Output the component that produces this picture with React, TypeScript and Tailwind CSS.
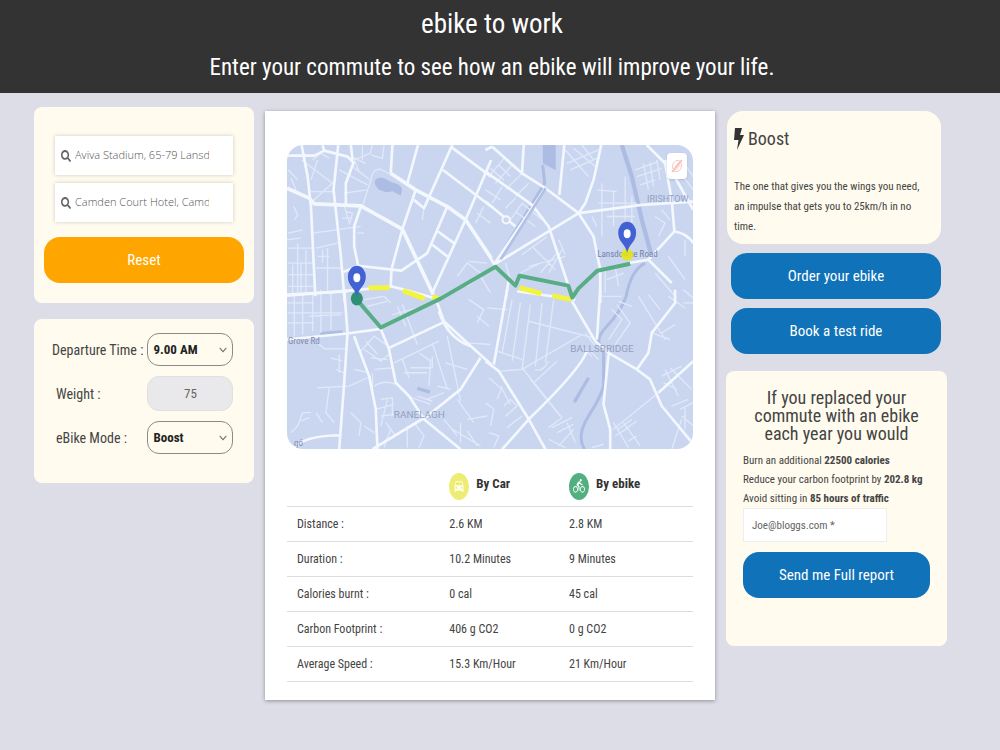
import React from 'react';
import { FaSearch } from 'react-icons/fa';
import { MdDirectionsBike, MdDirectionsCar } from 'react-icons/md';
import { ChevronDown } from 'lucide-react';

const rows = [
  { label: 'Distance :', car: '2.6 KM', ebike: '2.8 KM' },
  { label: 'Duration :', car: '10.2 Minutes', ebike: '9 Minutes' },
  { label: 'Calories burnt :', car: '0 cal', ebike: '45 cal' },
  { label: 'Carbon Footprint :', car: '406 g CO2', ebike: '0 g CO2' },
  { label: 'Average Speed :', car: '15.3 Km/Hour', ebike: '21 Km/Hour' },
];

const Pin: React.FC<{ x: number; y: number }> = ({ x, y }) => (
  <g transform={`translate(${x} ${y})`}>
    <path d="M0 18C-2 9-9 7-9-2A9 11 0 0 1 9-2C9 7 2 9 0 18Z" fill="#4262d3" />
    <ellipse cy="-1" rx="3.5" ry="4.5" fill="#fff" />
  </g>
);

const RouteMap: React.FC = () => (
  <div className="relative overflow-hidden rounded-2xl">
    <svg viewBox="0 0 1221 915" className="block w-full bg-[#cad6ef]" role="img" aria-label="Route map">
      {/* Water */}
      <g fill="none" stroke="#adbce2" strokeWidth="9">
        <path d="M769 0H808V76L770 55Z" stroke="none" fill="#adbce2" />
        <path d="M266 120C255 100 285 92 300 104C312 117 340 112 346 132L342 153L318 139L298 142L275 134Z" fill="#adbce2" stroke="none" />
        <path d="M769 60L775 115L625 360" />
        <path d="M1007 0L1037 95L1067 225L1097 335" strokeWidth="13" />
        <path d="M1077 355Q1035 375 1020 455Q1005 500 962 545T952 615V725Q945 755 907 815T895 915" />
        <path d="M907 700L864 773M392 732L430 743M100 567L168 562" strokeWidth="10" />
      </g>

      {/* Side streets */}
      <g fill="none" stroke="#e0e9f9" strokeWidth="4">
        <g transform="translate(-18 -15)">
          <path d="M62 60L155 130M90 120L110 60M90 155H160M88 190L160 125M95 60L120 40L145 55M235 95L220 60L268 40L275 15M210 50L255 70M245 15V60M310 15L305 55L270 45M175 90L260 135M215 80L265 118M245 200L270 120Q275 85 300 88L380 130M190 160L258 150M195 215L215 220L205 255M185 235H215M190 195L205 250" />
          <path d="M95 280L240 260M105 325L170 310M105 385H185M22 325H95M22 370H100M22 405H98M22 440H98M50 310V465M75 330V465M35 375V465M60 370V465M22 280L65 270M30 115L45 150M22 90L50 120M38 200L50 225L40 240M125 330V370M140 325V460M110 350H145M228 280H250M18 300L60 295M430 205L425 240M530 410L560 370L600 400M565 365L620 370M560 440L600 410L630 460" />
          <path d="M585 250L610 200M590 220L630 250" />
        </g>
        <g transform="translate(597 -15)">
          <path d="M10 110L60 50M30 130L80 75M60 150L115 95M90 170L130 130M40 75L75 110M15 85L55 120M60 60L95 90M0 150L45 180M20 190L50 140M75 240L110 190L170 240M90 215L150 260M130 190L150 215M60 205L90 175M110 345L185 290M130 380L240 350M165 400L215 340M105 400L165 370M140 320L210 390M190 400L230 330M220 300L240 345" />
          <path d="M240 30L310 110M265 25L330 80M245 70L340 30M255 90L335 55M290 15L325 60M335 150L395 155M350 130V290M385 150V260M420 110V240M440 170V250M340 190H455M365 230H450M400 265L440 255M320 230L335 260M450 90L520 65M455 110L530 85M465 135L510 120M475 70L490 150M495 65L505 140M515 60L525 120M510 230L540 250L520 290M530 210L555 240M595 110L625 150M575 120L600 170M600 75L625 110" />
          <path d="M360 380V460M390 380L400 440M365 420L415 400M60 370L75 420M550 350L600 420M510 400L570 470M600 300V350" />
        </g>
        <g transform="translate(-18 435)">
          <path d="M20 40H100M20 70H185M20 100H100M40 10V140M65 10V135M95 15V125M120 0V130M150 5V120M85 80L180 75M110 160L130 178H195M250 30L310 20L330 40M260 50L320 35M350 50L375 110M365 45L410 165M335 75L470 40M340 220L475 155M365 210L385 265M390 235H455V200M370 250H440M450 210L445 290M415 190L450 215M235 190L280 140L315 165M250 180L300 215L330 190M270 205L320 210M255 155L290 195M110 295L205 290L260 265M150 205L185 215M165 240L190 250M175 195V250M280 240L340 235M280 290Q310 270 345 285M275 250V300M300 330L335 325V380M285 360L340 345M300 380L340 375M320 330L300 410" />
          <path d="M30 430L50 410L65 370H90M60 395L85 385M145 295L135 370L160 400M105 370L125 400M210 370L240 400L235 440M250 410L280 430M380 410V475M400 400L430 440L415 475M455 160L500 300M500 140L540 335M565 30L610 60L590 100M495 220L560 240M560 160L630 165M470 290L510 300M440 330L490 310M530 330L580 400M490 390L530 440M540 400V460M515 420L600 470M560 390L620 380M590 80L625 110M560 425L590 470M380 320L450 345M410 320L455 335M220 240L265 250M315 400L345 440M330 420L310 475" />
        </g>
        <g transform="translate(597 435)">
          <path d="M5 55L65 60M80 30L50 190M105 40L80 215M135 45L110 240M170 40L150 230M205 30L180 220M130 95L325 145M35 185L110 210M45 245L110 240L290 135M110 235L230 385L190 415M145 280L215 215M150 240Q170 250 190 215M135 270L225 380M10 265L50 300L75 345M60 380L95 350L75 330L55 350M65 415L110 380M0 340L25 360L15 410M10 430L40 440L25 475M50 290L35 330" />
          <path d="M520 310L385 420M385 400L430 475M400 420L440 390M415 400L465 470M420 420L455 395M390 440L430 415M430 455L455 440M200 415L260 385M215 430L265 405M190 450L240 475M220 470L265 420M245 400L270 460M320 475L355 465M380 60L410 90L370 150M395 45L435 100L390 165M400 35L440 50M350 20H410M460 20L540 150M490 15L525 60M500 130L555 150M530 130L570 105M540 240L580 320M530 260L590 230M555 235L620 300M535 280L575 300M560 350L610 330M585 360L625 340M590 380L625 410M600 355V420M560 480L590 390M595 40H625M550 20L600 55M595 0L625 25M300 130L330 170M315 185L340 210M290 175L320 200" />
        </g>
      </g>

      {/* Main roads */}
      <g fill="none" stroke="#f3f8ff" strokeWidth="8" strokeLinejoin="round">
        <g transform="translate(-18 -15)">
          <path d="M18 47H100L130 32L200 50L218 68L195 130V195M62 15L80 110L90 200L103 470M172 15L158 150L168 240L180 350L192 490M130 32L125 15M210 15L215 60" />
          <path d="M18 145L85 175L100 192L240 198L365 268L458 465" strokeWidth="11" />
          <path d="M240 200L220 260V320L232 378L362 393L440 340L500 200M330 440L332 390L365 268L405 150M335 15L330 100" />
          <path d="M330 100L405 150L500 200L555 240L632 355" strokeWidth="11" />
          <path d="M412 15L380 130M515 15L430 205L400 180M510 20L632 110M487 90L632 200M632 60L555 240L455 460M455 315L500 350M472 275L520 310M185 398L232 378M18 468L240 450L330 440L370 450L460 475" />
        </g>
        <g transform="translate(597 -15)">
          <path d="M0 95L140 195L190 260L250 440M20 20L110 100L180 145L280 220L325 290L345 390V490M348 15L325 120L300 190L280 220L470 195L625 185M25 375L190 275L280 220M237 15L222 165M25 375L180 145M0 330L30 380M0 185L90 260M115 15L110 95M95 455L270 480" />
          <path d="M485 15L540 70L560 180L568 275L490 360L430 370M568 275Q605 280 625 310M490 360L560 430M540 60L625 210M70 420L60 480M0 30L20 20" />
          <circle cx="62" cy="240" r="11" fill="#cad6ef" strokeWidth="6" />
        </g>
        <g transform="translate(-18 435)">
          <path d="M18 15L200 5M190 0L200 130L190 280L175 480M18 150L200 132L300 118M220 140L265 260L285 360L290 480M300 118L325 180L345 280L385 320L430 390L540 480M325 175L485 100M470 40L490 95L560 160L632 225M475 65Q500 145 570 170M600 205L540 300L440 380L275 480M40 480Q60 440 175 438" />
        </g>
        <g transform="translate(597 435)">
          <path d="M65 0L25 225M0 215L40 245L130 390L180 480M305 185Q285 240 130 390L50 480M260 35L330 155L370 190L455 240L495 270L530 350L625 465M345 0L335 150M370 195L355 345L375 420V480M570 0V40L500 130L490 190L455 240M625 215L520 310" />
        </g>
        <path d="M643 344L778 130" stroke="#b3c1e4" />
      </g>

      <g transform="scale(3) translate(-286 -145)">
        <g fill="#94a0bf" fontFamily="Roboto, sans-serif" fontSize="10">
          <text x="647" y="202" fontSize="9">IRISHTOW</text>
          <text x="570" y="353">BALLSBRIDGE</text>
          <text x="393" y="419">RANELAGH</text>
          <g fill="#7c88aa" fontFamily="'Roboto Condensed', Roboto, sans-serif">
            <text x="287" y="345" fontSize="9">Grove Rd</text>
            <text x="293" y="447" fontSize="9">gó</text>
          </g>
        </g>
        {/* Car route */}
        <path d="M368 288H389M402 291L424 299M432 297L438 299M519 288L541 294M552 296L571 300" fill="none" stroke="#f2f43d" strokeWidth="5" />
        {/* Bike route */}
        <path
          d="M356 300L380 328L440 299L495 267L515 286L519 276L568 286L572 298L578 289L597 271L630 264"
          fill="none"
          stroke="#58ad85"
          strokeWidth="4"
          strokeLinejoin="round"
        />
        <ellipse cx="356" cy="299" rx="6" ry="7" fill="#2f8f74" />
        <text x="597" y="257" fill="#7280ad" fontFamily="'Roboto Condensed', Roboto, sans-serif" fontSize="9">Lansdowne Road</text>
        <ellipse cx="627" cy="255" rx="6" ry="6" fill="#e8e80a" opacity="0.85" />
        <Pin x={356} y={279} />
        <Pin x={627} y={235} />
      </g>
    </svg>

    <button
      type="button"
      aria-label="Toggle tracking"
      className="absolute top-2 right-1.5 flex h-[26px] w-5 items-center justify-center rounded-sm bg-white shadow"
    >
      <svg viewBox="0 0 14 18" className="h-[18px] w-3.5" fill="none" stroke="#f5bcb5">
        <path d="M2 15L12 3" strokeWidth="1.6" />
        <path d="M3 12C1 6 6 2 10 4M11 6C13 12 8 16 4 14" strokeWidth="0.9" />
        <path d="M5 10L9 5M6 13L10 8" strokeWidth="0.7" />
      </svg>
    </button>
  </div>
);

const SearchField: React.FC<{ label: string; value: string }> = ({ label, value }) => (
  <div className="flex h-[39px] items-center gap-1 bg-white pr-6 pl-1.5 shadow-[0_0_4px_rgba(0,0,0,0.2)]">
    <FaSearch className="h-3 w-2.5 shrink-0 text-[#666]" preserveAspectRatio="none" />
    <input
      type="text"
      aria-label={label}
      defaultValue={value}
      className="w-full min-w-0 bg-transparent font-['Open_Sans',sans-serif] text-[11px] font-light text-[#555] outline-none"
    />
  </div>
);

const SelectField: React.FC<{ id: string; options: string[] }> = ({ id, options }) => (
  <div className="relative">
    <select
      id={id}
      className="h-[33px] w-full appearance-none rounded-xl border border-[#8b8b86] bg-[#fffbee] px-[5px] pt-px text-[13px] font-bold text-[#222]"
    >
      {options.map((option) => (
        <option key={option}>{option}</option>
      ))}
    </select>
    <ChevronDown className="pointer-events-none absolute top-2.5 right-1 h-3.5 w-3 text-[#777]" strokeWidth={2} preserveAspectRatio="none" />
  </div>
);

const BlueButton: React.FC<{ children: React.ReactNode }> = ({ children }) => (
  <button type="button" className="h-[46px] w-full rounded-2xl bg-[#1072b8] text-[15px] text-white">
    {children}
  </button>
);

export default function App() {
  return (
    <div className="min-h-screen bg-[#dcdde7] font-['Roboto_Condensed',Roboto,sans-serif] text-[#444]">
      <header className="h-[93px] bg-[#333] pt-1 pr-4 text-center text-white">
        <h1 className="text-[27px] leading-10">ebike to work</h1>
        <p className="text-[23px] leading-[48px]">Enter your commute to see how an ebike will improve your life.</p>
      </header>

      <main className="grid grid-cols-[minmax(0,220fr)_minmax(0,450fr)_minmax(0,221fr)] items-start gap-[11px] pt-3.5 pr-[53px] pl-[34px]">
        <div className="flex flex-col gap-4">
          <section className="h-[196px] rounded-lg bg-[#fffbee] px-2.5 pt-[29px]">
            <div className="flex flex-col gap-2 px-[11px]">
              <SearchField label="From" value="Aviva Stadium, 65-79 Lansdowne Road" />
              <SearchField label="To" value="Camden Court Hotel, Camden Street" />
            </div>
            <button type="button" className="mt-[15px] h-[46px] w-full rounded-2xl bg-[#ffa500] text-[15px] text-white">
              Reset
            </button>
          </section>

          <section className="grid h-[164px] grid-cols-[1fr_86px] content-start items-center gap-x-1 gap-y-2.5 rounded-lg bg-[#fffbee] pt-3.5 pr-[21px] pl-[18px] text-sm">
            <label htmlFor="departure" className="whitespace-nowrap">Departure Time :</label>
            <SelectField id="departure" options={['9.00 AM', '10.00 AM', '11.00 AM']} />
            <label htmlFor="weight" className="pl-1">Weight :</label>
            <input
              id="weight"
              type="text"
              defaultValue="75"
              className="h-[35px] w-full rounded-xl border border-[#e0e0e2] bg-[#e9e9eb] text-center text-[13px] text-[#666]"
            />
            <label htmlFor="mode" className="pl-1">eBike Mode :</label>
            <SelectField id="mode" options={['Boost', 'Eco', 'Sport']} />
          </section>
        </div>

        <section className="mt-1 bg-white px-[22px] pt-[34px] pb-[18px] shadow-[0_1px_4px_rgba(0,0,0,0.35)]">
          <RouteMap />
          <table className="mt-[17px] w-full table-fixed text-left text-xs">
            <colgroup>
              <col className="w-[37%]" />
              <col className="w-[30%]" />
              <col className="w-[33%]" />
            </colgroup>
            <thead>
              <tr className="h-10 border-b border-[#ddd] text-[13px] text-[#333]">
                <td />
                <th scope="col" className="pl-3">
                  <div className="flex gap-[7px]">
                    <span className="flex h-[27px] w-5 items-center justify-center rounded-[50%] bg-[#eded76] text-[#fffde6]">
                      <MdDirectionsCar className="h-4 w-3" preserveAspectRatio="none" />
                    </span>
                    <span className="pt-0.5">By Car</span>
                  </div>
                </th>
                <th scope="col" className="pl-2.5">
                  <div className="flex gap-[7px]">
                    <span className="flex h-[27px] w-5 items-center justify-center rounded-[50%] bg-[#52b080] text-white">
                      <MdDirectionsBike className="h-4 w-3" preserveAspectRatio="none" />
                    </span>
                    <span className="pt-0.5">By ebike</span>
                  </div>
                </th>
              </tr>
            </thead>
            <tbody>
              {rows.map((row) => (
                <tr key={row.label} className="h-[35px] border-b border-[#ddd]">
                  <th scope="row" className="pl-2.5 font-normal">{row.label}</th>
                  <td className="pl-3">{row.car}</td>
                  <td className="pl-2.5">{row.ebike}</td>
                </tr>
              ))}
            </tbody>
          </table>
        </section>

        <div className="pt-1">
          <div className="flex flex-col gap-[9px] pr-1.5">
            <section className="ml-px h-[133px] rounded-2xl bg-[#fffbee] pt-3 pr-3 pl-[7px]">
              <h2 className="flex items-center gap-1 text-lg leading-8">
                <svg viewBox="0 0 10 22" className="h-[22px] w-2.5" fill="#333">
                  <path d="M1 0H8L6 7H10L3 22L4.500 12H0Z" />
                </svg>
                Boost
              </h2>
              <p className="mt-[22px] text-[11px] leading-5">
                The one that gives you the wings you need, an impulse that gets you to 25km/h in no time.
              </p>
            </section>
            <div className="pl-[5px]">
              <BlueButton>Order your ebike</BlueButton>
            </div>
            <div className="pl-[5px]">
              <BlueButton>Book a test ride</BlueButton>
            </div>
          </div>

          <section className="mt-[17px] h-[275px] rounded-lg bg-[#fffbee] px-[17px] pt-[18px]">
            <h2 className="text-center text-lg leading-[18px]">
              If you replaced your commute with an ebike each year you would
            </h2>
            <div className="mt-2 text-[11px] leading-[19px] whitespace-nowrap">
              <p>Burn an additional <b>22500 calories</b></p>
              <p>Reduce your carbon footprint by <b>202.8 kg</b></p>
              <p>Avoid sitting in <b>85 hours of traffic</b></p>
            </div>
            <input
              type="email"
              aria-label="Email"
              placeholder="Joe@bloggs.com *"
              className="mb-2.5 block h-[34px] w-36 border border-[#eee] bg-white px-2 text-[11px] placeholder:text-[#666]"
            />
            <BlueButton>Send me Full report</BlueButton>
          </section>
        </div>
      </main>
    </div>
  );
}
